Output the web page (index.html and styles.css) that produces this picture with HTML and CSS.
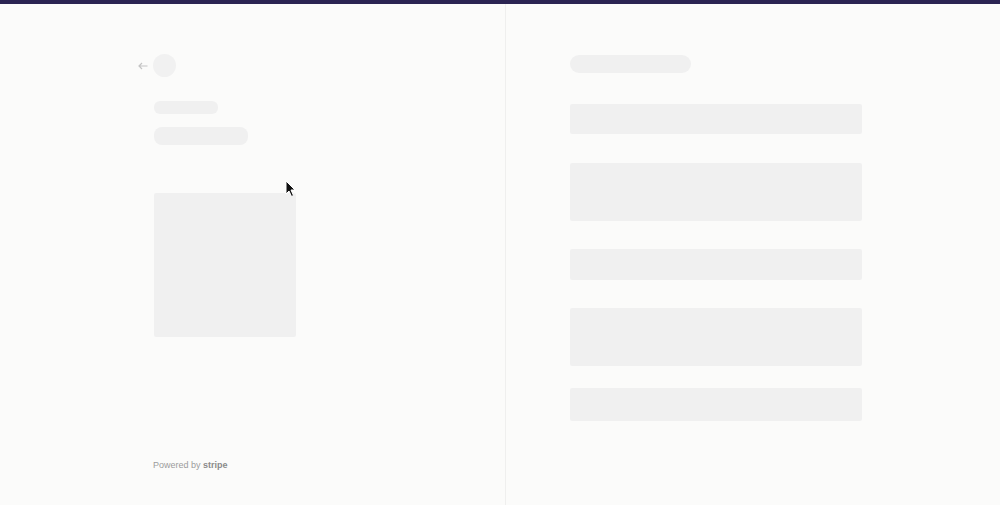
FILE: index.html
```html
<!DOCTYPE html>
<html>
<head>
<meta charset="utf-8">
<link rel="stylesheet" href="styles.css">
</head>
<body>
<div class="topbar"></div>
<div class="page">
  <div class="left">
    <div class="head">
      <svg class="back" width="10" height="8" viewBox="0 0 10 8"><path d="M4 1 L1 4 L4 7 M1 4 H9.5" fill="none" stroke="#c4c4c4" stroke-width="1.2"/></svg>
      <div class="avatar"></div>
    </div>
    <div class="sk bar1"></div>
    <div class="sk bar2"></div>
    <div class="sk square"></div>
    <div class="powered">Powered by <b>stripe</b></div>
  </div>
  <div class="right">
    <div class="sk pill"></div>
    <div class="sk r1"></div>
    <div class="sk r2"></div>
    <div class="sk r3"></div>
    <div class="sk r4"></div>
    <div class="sk r5"></div>
  </div>
</div>
<svg class="cursor" width="12" height="18" viewBox="0 0 12 18"><path d="M1 1 L1 14 L4 11 L6.5 16.5 L8.5 15.5 L6 10 L10 10 Z" fill="#111" stroke="#fff" stroke-width="1"/></svg>
</body>
</html>
```
FILE: styles.css
```css
* { box-sizing: border-box; }
html, body { margin: 0; padding: 0; }
body {
  width: 1000px;
  height: 505px;
  overflow: hidden;
  background: #fbfbfa;
  font-family: "Liberation Sans", Arial, sans-serif;
  position: relative;
}
.topbar { height: 4px; background: #2b2452; }
.page { display: flex; height: 501px; }
.left {
  width: 506px;
  border-right: 1px solid #efefee;
  padding: 50px 0 0 138px;
  display: flex;
  flex-direction: column;
  align-items: flex-start;
}
.head { display: flex; align-items: center; height: 23px; }
.back { display: block; margin-right: 5px; margin-top: 0; }
.avatar { width: 23px; height: 23px; border-radius: 50%; background: #f1f1f1; }
.sk { background: #f0f0f0; border-radius: 3px; }
.bar1 { width: 64px; height: 13px; margin: 24px 0 0 16px; border-radius: 6px; }
.bar2 { width: 94px; height: 18px; margin: 13px 0 0 16px; border-radius: 8px; }
.square { width: 142px; height: 144px; margin: 48px 0 0 16px; border-radius: 2px; }
.powered {
  margin: 122px 0 0 15px;
  font-size: 9px;
  line-height: 12px;
  color: #9c9c9c;
}
.powered b { color: #8a8a8a; font-weight: 700; }
.right {
  flex: 1;
  padding: 51px 0 0 64px;
  display: flex;
  flex-direction: column;
  align-items: flex-start;
}
.pill { width: 121px; height: 18px; border-radius: 9px; }
.r1, .r2, .r3, .r4, .r5 { width: 292px; border-radius: 2px; }
.r1 { height: 30px; margin-top: 31px; }
.r2 { height: 58px; margin-top: 29px; }
.r3 { height: 31px; margin-top: 28px; }
.r4 { height: 58px; margin-top: 28px; }
.r5 { height: 33px; margin-top: 22px; }
.cursor { position: absolute; left: 285px; top: 180px; }
```
